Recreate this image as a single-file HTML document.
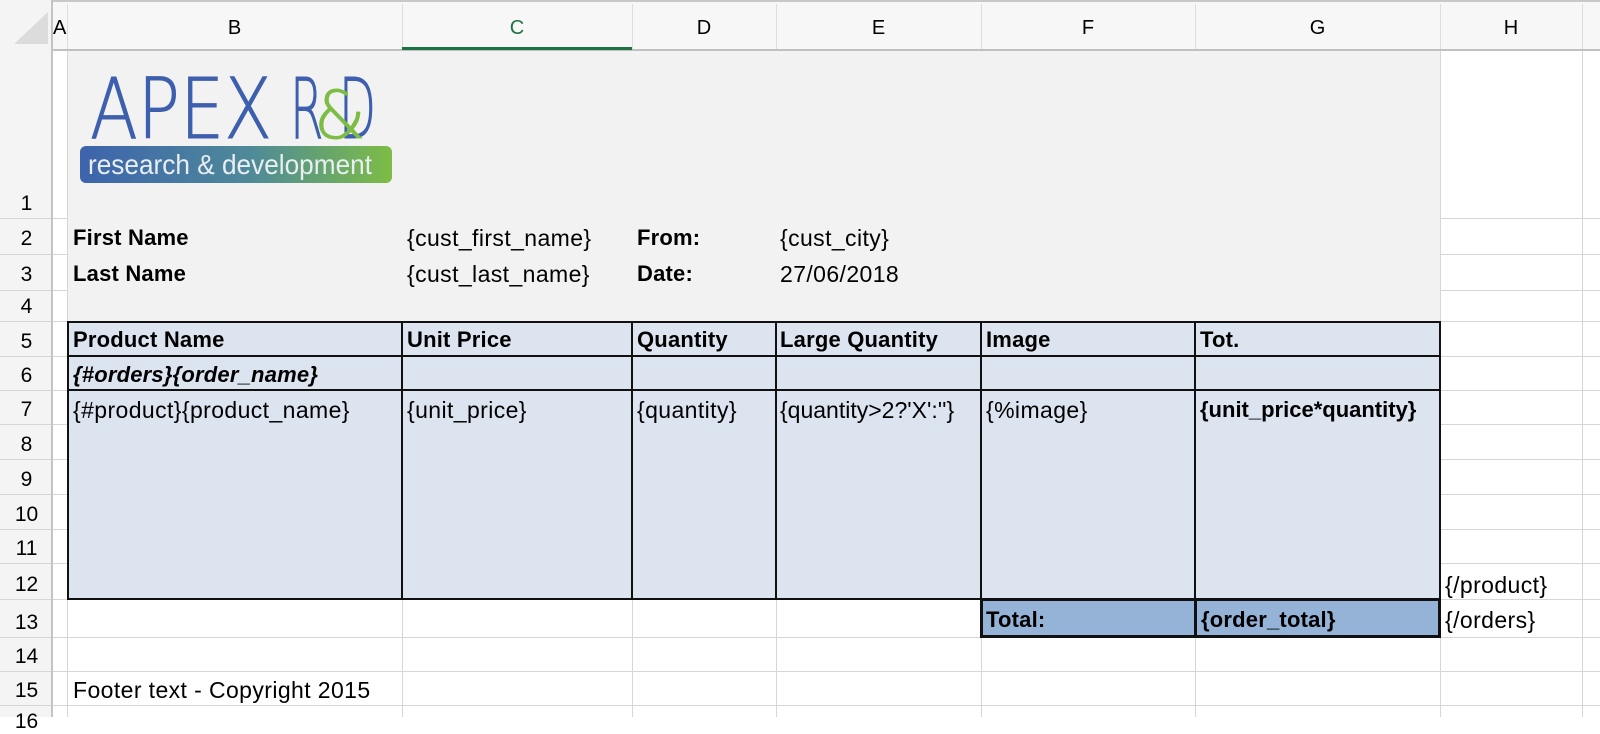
<!DOCTYPE html>
<html><head><meta charset="utf-8">
<style>
*{margin:0;padding:0;box-sizing:border-box}
body{width:1600px;height:717px;overflow:hidden;background:#fff;position:relative;font-family:"Liberation Sans",Arial,sans-serif;color:#000}
.a{position:absolute}
.vl{position:absolute;width:1px;background:#d6d6d6;top:51px;height:666px}
.hl{position:absolute;height:1px;background:#d6d6d6;left:0;width:1600px}
.t{position:absolute;font-size:23px;line-height:26px;white-space:nowrap;letter-spacing:0.4px}
.b{font-weight:bold;font-size:22px;letter-spacing:0.2px}
.rn{position:absolute;left:0;width:53px;text-align:center;font-size:21px;line-height:24px}
.cl{position:absolute;top:16px;font-size:20px;text-align:center;line-height:24px}
</style></head><body>
<div class="a" style="left:0;top:0;width:1600px;height:51px;background:#f7f7f7;border-top:2px solid #c8c8c8;border-bottom:2px solid #c0c0c0"></div>
<div class="a" style="left:0;top:0;width:53px;height:717px;background:#f4f4f4;border-right:2px solid #c4c4c4"></div>
<svg class="a" style="left:10px;top:10px" width="40" height="36"><polygon points="38,2 38,34 4,34" fill="#dcdcdc"/></svg>
<div class="vl" style="left:67px"></div><div class="vl" style="left:402px"></div><div class="vl" style="left:632px"></div><div class="vl" style="left:776px"></div><div class="vl" style="left:981px"></div><div class="vl" style="left:1195px"></div><div class="vl" style="left:1440px"></div><div class="vl" style="left:1582px"></div>
<div class="a" style="left:67px;top:4px;width:1px;height:45px;background:#ddd"></div>
<div class="a" style="left:402px;top:4px;width:1px;height:45px;background:#ddd"></div>
<div class="a" style="left:632px;top:4px;width:1px;height:45px;background:#ddd"></div>
<div class="a" style="left:776px;top:4px;width:1px;height:45px;background:#ddd"></div>
<div class="a" style="left:981px;top:4px;width:1px;height:45px;background:#ddd"></div>
<div class="a" style="left:1195px;top:4px;width:1px;height:45px;background:#ddd"></div>
<div class="a" style="left:1440px;top:4px;width:1px;height:45px;background:#ddd"></div>
<div class="a" style="left:1582px;top:4px;width:1px;height:45px;background:#ddd"></div>
<div class="a" style="left:402px;top:47px;width:230px;height:3px;background:#1e7145"></div>
<div class="cl" style="left:53px;width:14px;text-align:left">A</div>
<div class="cl" style="left:67px;width:335px">B</div>
<div class="cl" style="left:402px;width:230px;color:#1e7145">C</div>
<div class="cl" style="left:632px;width:144px">D</div>
<div class="cl" style="left:776px;width:205px">E</div>
<div class="cl" style="left:981px;width:214px">F</div>
<div class="cl" style="left:1195px;width:245px">G</div>
<div class="cl" style="left:1440px;width:142px">H</div>
<div class="hl" style="top:218px"></div><div class="hl" style="top:254px"></div><div class="hl" style="top:290px"></div><div class="hl" style="top:321px"></div><div class="hl" style="top:356px"></div><div class="hl" style="top:390px"></div><div class="hl" style="top:424px"></div><div class="hl" style="top:459px"></div><div class="hl" style="top:494px"></div><div class="hl" style="top:529px"></div><div class="hl" style="top:563px"></div><div class="hl" style="top:599px"></div><div class="hl" style="top:637px"></div><div class="hl" style="top:671px"></div><div class="hl" style="top:705px"></div>
<div class="a" style="left:51px;top:51px;width:2px;height:666px;background:#c4c4c4"></div>
<div class="rn" style="top:192px">1</div><div class="rn" style="top:227px">2</div><div class="rn" style="top:263px">3</div><div class="rn" style="top:295px">4</div><div class="rn" style="top:330px">5</div><div class="rn" style="top:364px">6</div><div class="rn" style="top:398px">7</div><div class="rn" style="top:433px">8</div><div class="rn" style="top:468px">9</div><div class="rn" style="top:503px">10</div><div class="rn" style="top:537px">11</div><div class="rn" style="top:573px">12</div><div class="rn" style="top:611px">13</div><div class="rn" style="top:645px">14</div><div class="rn" style="top:679px">15</div><div class="rn" style="top:710px">16</div>
<div class="a" style="left:68px;top:51px;width:1372px;height:270px;background:#f2f2f2"></div>
<svg class="a" style="left:78px;top:66px" width="320" height="122">
<defs><linearGradient id="g" x1="0" x2="1"><stop offset="0" stop-color="#3d63ad"/><stop offset="0.55" stop-color="#4f8a98"/><stop offset="1" stop-color="#7dbd45"/></linearGradient></defs>
<text x="12" y="72" font-family="DejaVu Sans ExtraLight, DejaVu Sans" font-weight="200" font-size="84" fill="#3d5fae" stroke="#3d5fae" stroke-width="1" textLength="182" lengthAdjust="spacingAndGlyphs">APEX</text>
<text x="212" y="72" font-family="DejaVu Sans ExtraLight, DejaVu Sans" font-weight="200" font-size="84" fill="#3d5fae" stroke="#3d5fae" stroke-width="1" textLength="86" lengthAdjust="spacingAndGlyphs">R D</text>
<text x="236" y="72" font-family="DejaVu Sans ExtraLight, DejaVu Sans" font-weight="200" font-size="66" fill="#7dbd45" stroke="#7dbd45" stroke-width="1">&amp;</text>
<rect x="2" y="80" width="312" height="37" rx="6" fill="url(#g)"/>
<text x="10" y="108" font-family="Liberation Sans" font-size="28" fill="#e8eef2" textLength="284" lengthAdjust="spacingAndGlyphs">research &amp; development</text>
</svg>
<div class="t b" style="left:73px;top:225px">First Name</div>
<div class="t b" style="left:73px;top:261px">Last Name</div>
<div class="t" style="left:407px;top:225px">{cust_first_name}</div>
<div class="t" style="left:407px;top:261px">{cust_last_name}</div>
<div class="t b" style="left:637px;top:225px">From:</div>
<div class="t b" style="left:637px;top:261px">Date:</div>
<div class="t" style="left:780px;top:225px">{cust_city}</div>
<div class="t" style="left:780px;top:261px">27/06/2018</div>
<div class="a" style="left:67px;top:321px;width:1374px;height:279px;background:#dce4f0;border:2px solid #111"></div>
<div class="a" style="left:67px;top:355px;width:1374px;height:2px;background:#111"></div>
<div class="a" style="left:67px;top:389px;width:1374px;height:2px;background:#111"></div>
<div class="a" style="left:401px;top:321px;width:2px;height:279px;background:#111"></div>
<div class="a" style="left:631px;top:321px;width:2px;height:279px;background:#111"></div>
<div class="a" style="left:775px;top:321px;width:2px;height:279px;background:#111"></div>
<div class="a" style="left:980px;top:321px;width:2px;height:279px;background:#111"></div>
<div class="a" style="left:1194px;top:321px;width:2px;height:279px;background:#111"></div>
<div class="t b" style="left:73px;top:327px">Product Name</div>
<div class="t b" style="left:407px;top:327px">Unit Price</div>
<div class="t b" style="left:637px;top:327px">Quantity</div>
<div class="t b" style="left:780px;top:327px">Large Quantity</div>
<div class="t b" style="left:986px;top:327px">Image</div>
<div class="t b" style="left:1200px;top:327px">Tot.</div>
<div class="t b" style="left:73px;top:362px;font-style:italic">{#orders}{order_name}</div>
<div class="t" style="left:73px;top:397px">{#product}{product_name}</div>
<div class="t" style="left:407px;top:397px">{unit_price}</div>
<div class="t" style="left:637px;top:397px">{quantity}</div>
<div class="t" style="left:780px;top:397px;letter-spacing:0">{quantity&gt;2?'X':''}</div>
<div class="t" style="left:986px;top:397px">{%image}</div>
<div class="t b" style="left:1200px;top:397px;letter-spacing:0">{unit_price*quantity}</div>
<div class="t" style="left:1445px;top:572px">{/product}</div>
<div class="a" style="left:980px;top:598px;width:461px;height:40px;background:#95b3d7;border:3px solid #111"></div>
<div class="a" style="left:1194px;top:598px;width:3px;height:40px;background:#111"></div>
<div class="t b" style="left:986px;top:607px">Total:</div>
<div class="t b" style="left:1201px;top:607px">{order_total}</div>
<div class="t" style="left:1445px;top:607px">{/orders}</div>
<div class="t" style="left:73px;top:677px">Footer text - Copyright 2015</div>
</body></html>
